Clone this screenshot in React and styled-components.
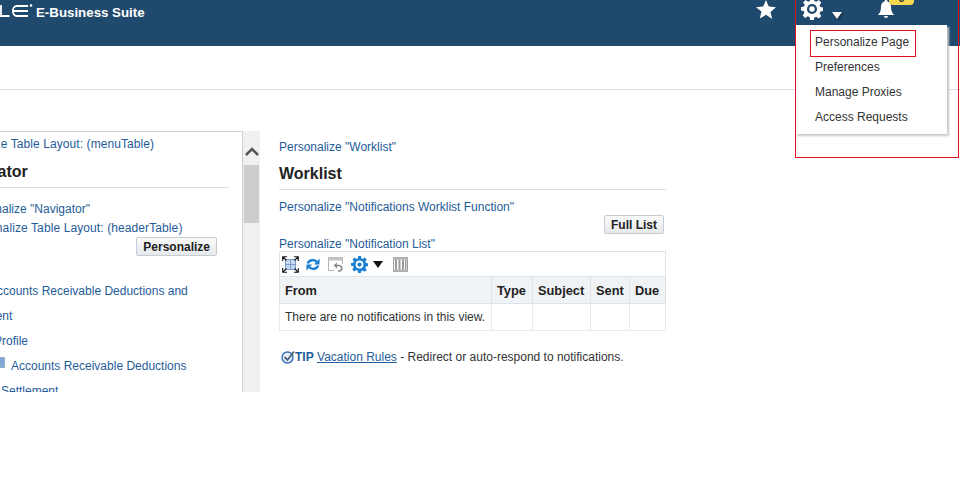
import React from 'react';
import styled, { createGlobalStyle } from 'styled-components';

const GlobalStyle = createGlobalStyle`
    html, body {
        margin: 0;
        padding: 0;
        background: #fff;
        font-family: "Liberation Sans", Arial, sans-serif;
        font-size: 12px;
    }
`;

const Page = styled.div`
    position: relative;
    width: 960px;
    height: 504px;
    overflow: hidden;
    background: #fff;
`;

const Header = styled.header`
    height: 46px;
    background: #1f4a6e;
    display: flex;
    align-items: flex-start;
    color: #fff;
`;

const Brand = styled.div`
    display: flex;
    align-items: center;
    height: 25px;
    flex: 1;
`;

const Suite = styled.span`
    margin-left: 3px;
    font-size: 13.3px;
    font-weight: 700;
`;

const HeaderIcons = styled.div`
    display: flex;
    align-items: flex-start;
`;

const IconSlot = styled.div`
    position: relative;
    display: flex;
    align-items: flex-start;
    width: ${p => p.$w}px;
    height: 25px;

    & > svg {
        margin-top: ${p => p.$top || 0}px;
    }
`;

const CaretBox = styled.span`
    display: flex;
    margin: 12px 0 0 9px;
    filter: drop-shadow(1px 1px 1px #0c2236);
`;

const Badge = styled.span`
    position: absolute;
    left: 11px;
    top: -8px;
    width: 25px;
    height: 13px;
    border-radius: 4px;
    background: #f5d94e;
    color: #333;
    font-size: 10px;
    line-height: 13px;
    font-weight: 700;
    text-align: center;
`;

const SubHeader = styled.div`
    height: 43px;
    border-bottom: 1px solid #d9dfe4;
`;

const Content = styled.main`
    display: flex;
    margin-top: 41px;
    height: 261px;
`;

const SidePanel = styled.aside`
    width: 243px;
    flex: none;
    box-sizing: border-box;
    border-top: 1px solid #c9d0d6;
    border-right: 1px solid #c9d0d6;
    overflow: hidden;
`;

const SideInner = styled.div`
    margin-left: -100px;
    padding-top: 5px;
    white-space: nowrap;
`;

const Link = styled.a`
    display: block;
    color: #1f5c99;
    font-size: 12px;
    line-height: ${p => p.$lh || 15}px;
    padding-left: ${p => p.$indent || 0}px;
    letter-spacing: ${p => p.$ls || 0}px;
`;

const SideTitle = styled.h2`
    margin: 11px 0 0;
    padding: 0 0 6px 54px;
    width: 275px;
    height: 18px;
    font-size: 16px;
    line-height: 18px;
    font-weight: 700;
    color: #222;
    border-bottom: 1px solid #d9dfe4;
`;

const SideLinks = styled.div`
    margin-top: 12px;
`;

const ButtonRow = styled.div`
    display: flex;
    justify-content: flex-end;
    width: ${p => p.$w}px;
    margin-top: ${p => p.$top || 0}px;
`;

const Button = styled.button`
    height: 19px;
    padding: 0 6px;
    border: 1px solid #c5ccd2;
    border-radius: 2px;
    background: linear-gradient(#f8f9fa, #e6e9ec);
    font-family: inherit;
    font-size: 12px;
    font-weight: 700;
    color: #222;
`;

const TreeLinks = styled.div`
    margin-top: 22px;
`;

const TreeRow = styled.div`
    display: flex;
    align-items: center;
    height: 25px;
    padding-left: ${p => p.$indent}px;
    color: #1f5c99;
`;

const Folder = styled.span`
    position: relative;
    top: -3px;
    width: 7px;
    height: 9px;
    margin-right: 6px;
    background: #7fa9d6;
    border: 1px solid #9ab0c4;
`;

const ScrollTrack = styled.div`
    width: 17px;
    flex: none;
    background: #f0f0f0;
    display: flex;
    flex-direction: column;
`;

const ScrollUp = styled.div`
    height: 34px;
    box-sizing: border-box;
    padding-top: 7px;
    display: flex;
    align-items: center;
    justify-content: center;
`;

const ScrollThumb = styled.div`
    height: 58px;
    margin: 0 1px;
    background: #cdcdcd;
`;

const Main = styled.section`
    width: 387px;
    margin-left: 19px;
    padding-top: 9px;
`;

const MainTitle = styled.h1`
    margin: 10px 0 0;
    padding-bottom: 6px;
    font-size: 16px;
    line-height: 18px;
    font-weight: 700;
    color: #222;
    border-bottom: 1px solid #d9dfe4;
`;

const FunctionLink = styled(Link)`
    margin-top: 10px;
`;

const ListLink = styled(Link)`
    margin-top: 3px;
`;

const Toolbar = styled.div`
    display: flex;
    align-items: center;
    height: 25px;
    margin-top: -1px;
    padding-left: 2px;
    border: 1px solid #dde3e8;
    border-bottom: none;
    box-sizing: border-box;
`;

const Tool = styled.span`
    display: flex;
    margin-left: ${p => p.$ml || 0}px;
`;

const Table = styled.table`
    width: 386px;
    border-collapse: collapse;
    table-layout: fixed;
`;

const Th = styled.th`
    height: 26px;
    padding: 0 0 0 5px;
    background: #f0f3f6;
    border: 1px solid #dde3e8;
    font-size: 12.8px;
    font-weight: 700;
    color: #222;
    text-align: left;
    white-space: nowrap;
`;

const Td = styled.td`
    height: 26px;
    padding: 0 0 0 5px;
    border: 1px solid #e8ebee;
    color: #333;
    font-size: 12px;
    white-space: nowrap;
`;

const Tip = styled.div`
    margin-top: 18px;
    padding-left: 2px;
    height: 16px;
    line-height: 16px;
    color: #333;
    white-space: nowrap;

    & > svg {
        vertical-align: -3px;
    }
`;

const TipLabel = styled.b`
    color: #1f5c99;
`;

const TipLink = styled.u`
    color: #1f5c99;
`;

const Menu = styled.ul`
    position: absolute;
    left: 795px;
    top: 25px;
    width: 152px;
    height: 109px;
    margin: 0;
    padding: 5px 0 0;
    box-sizing: border-box;
    list-style: none;
    background: #fff;
    box-shadow: 2px 2px 2px #c8c8c8;
`;

const MenuItem = styled.li`
    height: 25px;
    line-height: 25px;
    padding-left: 20px;
    color: #333;
    font-size: 12px;
`;

const Callout = styled.div`
    position: absolute;
    box-sizing: border-box;
    border: 1px solid #e0101e;
    left: ${p => p.$x}px;
    top: ${p => p.$y}px;
    width: ${p => p.$w}px;
    height: ${p => p.$h}px;
`;

const LogoMark = () => (
    <svg width="33" height="25" viewBox="0 0 33 25">
        <path fill="none" stroke="#fff" strokeWidth="1.8" d="M1 5v11h8.500" />
        <path fill="none" stroke="#fff" strokeWidth="1.8" d="M28 6h-11c-5.500 0-5.500 10 0 10h11M13 11h15" />
        <circle cx="31" cy="5.500" r="1.300" fill="#fff" />
    </svg>
);

const StarIcon = () => (
    <svg width="20" height="20" viewBox="0 0 20 20">
        <path fill="#fff" d="M10 0l2.800 6.600 7.200.6-5.500 4.700 1.700 7.100L10 14.800l-6.200 3.700 1.700-7.100L0 7.200l7.200-.6z" />
    </svg>
);

const GearIcon = ({ size = 22, color = '#fff', hole = '#1f4a6e' }) => (
    <svg width={size} height={size} viewBox="0 0 24 24">
        <path fill={color} d="M10 0h4l.6 3.300 2 .8L19.400 2.200l2.800 2.800-1.900 2.800.8 2 3.300.6v3.800l-3.300.6-.8 2 1.900 2.800-2.800 2.800-2.800-1.900-2 .8L14 24h-4l-.6-3.300-2-.8-2.800 1.900-2.800-2.800 1.900-2.800-.8-2L0 13.600V10l3.300-.6.8-2L2.200 5 5 2.200l2.800 1.900 2-.8z" />
        <circle cx="12" cy="12" r="5.500" fill={hole} />
        <circle cx="12" cy="12" r="3" fill={color} />
    </svg>
);

const Caret = ({ color = '#fff' }) => (
    <svg width="10" height="7" viewBox="0 0 10 7">
        <path fill={color} d="M0 0h10L5 7z" />
    </svg>
);

const BellIcon = () => (
    <svg width="16" height="19" viewBox="0 0 16 19">
        <path fill="#fff" d="M8 0c1 0 1.500.6 1.500 1.400C12 2 13 4 13 7c0 4 1 5.500 3 8H0c2-2.500 3-4 3-8 0-3 1-5 3.500-5.600C6.500.6 7 0 8 0zM6 16h4a2 2 0 0 1-4 0z" />
    </svg>
);

const ChevronUp = () => (
    <svg width="14" height="9" viewBox="0 0 14 9">
        <path fill="none" stroke="#555" strokeWidth="2.500" d="M1 8l6-6 6 6" />
    </svg>
);

const ExpandIcon = () => (
    <svg width="17" height="17" viewBox="0 0 17 17">
        <rect x="3.500" y="3.500" width="10" height="10" fill="#c6d7f0" stroke="#7d9bcd" />
        <path stroke="#7d9bcd" d="M8.500 3.500v10M3.500 8.500h10" />
        <path fill="none" stroke="#111" strokeWidth="1.100" d="M.7 5V.7H5M12 .7h4.300V5M.7 12v4.300H5M16.300 12v4.300H12M1 1l3.500 3.500M16 1l-3.500 3.500M1 16l3.500-3.500M16 16l-3.500-3.500" />
    </svg>
);

const RefreshIcon = () => (
    <svg width="14" height="15" viewBox="0 0 15 15">
        <path fill="none" stroke="#1b7fd1" strokeWidth="2.600" d="M2 6.500C3 2.500 9 1.500 12 5M13 8.500C12 12.500 6 13.500 3 10" />
        <path fill="#1b7fd1" d="M14.500 1V7.500H8.500zM.5 14V7.500H6.500z" />
    </svg>
);

const RevertIcon = () => (
    <svg width="17" height="17" viewBox="0 0 17 17">
        <rect x=".5" y="1.500" width="14" height="13" fill="#fff" stroke="#b4b4b4" />
        <path fill="#c4c4c4" d="M.5 1.500h14v3H.5z" />
        <path fill="#fff" d="M6 8h11v9H6z" />
        <path fill="none" stroke="#8a8a8a" strokeWidth="1.600" d="M8 9.500h3.500a2.800 2.800 0 0 1 0 5.500H10" />
        <path fill="#8a8a8a" d="M5.500 9.500L9 6.500v6z" />
    </svg>
);

const ColumnsIcon = () => (
    <svg width="15" height="15" viewBox="0 0 15 15">
        <rect x=".5" y=".5" width="14" height="14" fill="#fff" stroke="#a0a0a0" />
        <path fill="#b0b0b0" d="M0 0h15v2.500H0zM0 12.500h15V15H0z" />
        <path fill="#9a9a9a" d="M2 2.500h2v10H2zM5.500 2.500h2v10h-2zM9 2.500h2v10H9zM12 2.500h1.500v10H12z" />
    </svg>
);

const TipIcon = () => (
    <svg width="14" height="15" viewBox="0 0 14 15">
        <circle cx="6.500" cy="8.500" r="5.500" fill="#e8eef7" stroke="#2e6db4" strokeWidth="1.400" />
        <path fill="none" stroke="#4a5f7a" strokeWidth="1.800" d="M3.500 8l3 3L13 2.500" />
    </svg>
);

export default function App() {
    return (
        <Page>
            <GlobalStyle />
            <Header>
                <Brand>
                    <LogoMark />
                    <Suite>E-Business Suite</Suite>
                </Brand>
                <HeaderIcons>
                    <IconSlot $w={45}><StarIcon /></IconSlot>
                    <IconSlot $w={77} $top={-2}>
                        <GearIcon />
                        <CaretBox><Caret /></CaretBox>
                    </IconSlot>
                    <IconSlot $w={82}>
                        <BellIcon />
                        <Badge>3</Badge>
                    </IconSlot>
                </HeaderIcons>
            </Header>
            <SubHeader />
            <Content>
                <SidePanel>
                    <SideInner>
                        <Link $indent={44} $ls={0.08}>Personalize Table Layout: (menuTable)</Link>
                        <SideTitle>Navigator</SideTitle>
                        <SideLinks>
                            <Link $lh={19} $indent={64}>Personalize "Navigator"</Link>
                            <Link $lh={19} $indent={64} $ls={0.1}>Personalize Table Layout: (headerTable)</Link>
                        </SideLinks>
                        <ButtonRow $w={317} $top={-1}><Button>Personalize</Button></ButtonRow>
                        <TreeLinks>
                            <TreeRow $indent={89}>Accounts Receivable Deductions and</TreeRow>
                            <TreeRow $indent={55}>Settlement</TreeRow>
                            <TreeRow $indent={94}>Profile</TreeRow>
                            <TreeRow $indent={96}><Folder />Accounts Receivable Deductions</TreeRow>
                            <TreeRow $indent={101}>Settlement</TreeRow>
                        </TreeLinks>
                    </SideInner>
                </SidePanel>
                <ScrollTrack>
                    <ScrollUp><ChevronUp /></ScrollUp>
                    <ScrollThumb />
                </ScrollTrack>
                <Main>
                    <Link>Personalize "Worklist"</Link>
                    <MainTitle>Worklist</MainTitle>
                    <FunctionLink>Personalize "Notifications Worklist Function"</FunctionLink>
                    <ButtonRow $w={385}><Button>Full List</Button></ButtonRow>
                    <ListLink>Personalize "Notification List"</ListLink>
                    <Toolbar>
                        <Tool><ExpandIcon /></Tool>
                        <Tool $ml={7}><RefreshIcon /></Tool>
                        <Tool $ml={8}><RevertIcon /></Tool>
                        <Tool $ml={6}><GearIcon size={17} color="#1b7fd1" hole="#fff" /></Tool>
                        <Tool $ml={5}><Caret color="#111" /></Tool>
                        <Tool $ml={10}><ColumnsIcon /></Tool>
                    </Toolbar>
                    <Table>
                        <colgroup>
                            <col width="212" /><col width="41" /><col width="58" /><col width="39" /><col width="36" />
                        </colgroup>
                        <thead>
                            <tr>
                                <Th>From</Th><Th>Type</Th><Th>Subject</Th><Th>Sent</Th><Th>Due</Th>
                            </tr>
                        </thead>
                        <tbody>
                            <tr>
                                <Td>There are no notifications in this view.</Td><Td /><Td /><Td /><Td />
                            </tr>
                        </tbody>
                    </Table>
                    <Tip>
                        <TipIcon />
                        <TipLabel>TIP</TipLabel> <TipLink>Vacation Rules</TipLink> - Redirect or auto-respond to notifications.
                    </Tip>
                </Main>
            </Content>
            <Menu>
                <MenuItem>Personalize Page</MenuItem>
                <MenuItem>Preferences</MenuItem>
                <MenuItem>Manage Proxies</MenuItem>
                <MenuItem>Access Requests</MenuItem>
            </Menu>
            <Callout $x={795} $y={-2} $w={164} $h={160} />
            <Callout $x={810} $y={30} $w={106} $h={27} />
        </Page>
    );
}
